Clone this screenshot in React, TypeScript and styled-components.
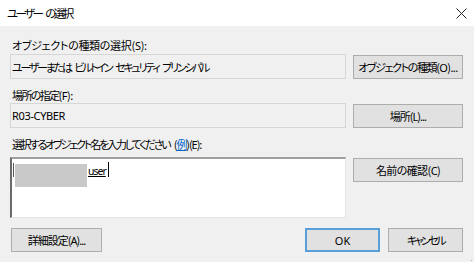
import React from "react";
import styled, { createGlobalStyle } from "styled-components";

const Global = createGlobalStyle`
  html, body { margin: 0; padding: 0; }
  body {
    width: 474px; height: 262px; overflow: hidden;
    font-family: "Noto Sans CJK JP", "Noto Sans", sans-serif;
    font-size: 11px; color: #000;
    font-feature-settings: "palt";
  }
`;

type Track = { $ls?: number; $ws?: number };

const tracking = (p: Track) =>
  `letter-spacing: ${p.$ls ?? -1}px; word-spacing: ${p.$ws ?? 0}px;`;

const Window = styled.div`
  width: 474px; height: 262px;
  display: flex; flex-direction: column;
  background: #f0f0f0;
  position: relative;
`;

const TitleBar = styled.div`
  height: 26px; flex: none;
  background: #fff;
  display: flex; align-items: center; justify-content: space-between;
  padding: 0 7px 0 7px;
  box-sizing: border-box;
`;

const TitleText = styled.span<Track>`
  font-size: 11.5px;
  ${tracking}
`;

const CloseBox = styled.div`
  width: 12px; height: 12px;
  display: flex; align-items: center; justify-content: center;
`;

const Body = styled.div`
  flex: 1;
  display: flex; flex-direction: column;
  padding: 11px 11px 0 10px;
`;

const Label = styled.div<Track & { $mt?: number; $mb?: number }>`
  height: 16px; line-height: 16px;
  padding-left: 2px;
  margin-top: ${(p) => p.$mt ?? 0}px;
  margin-bottom: ${(p) => p.$mb ?? 0}px;
  white-space: nowrap;
  ${tracking}
`;

const Suffix = styled.span<Track>`
  ${tracking}
`;

const Link = styled.span`
  color: #0066cc;
  text-decoration: underline;
`;

const Row = styled.div`
  display: flex; gap: 7px; align-items: flex-start;
`;

const ReadField = styled.div<Track>`
  flex: 1; height: 25px;
  box-sizing: border-box;
  border: 1px solid #d6d6d6;
  background: #f0f0f0;
  display: flex; align-items: center;
  padding-left: 1px;
  white-space: pre;
  ${tracking}
`;

const Latin = styled.span`
  font-family: "Noto Sans", "Liberation Sans", sans-serif;
`;

const Button = styled.button<Track & { $w: number; $primary?: boolean; $mt?: number }>`
  width: ${(p) => p.$w}px; height: 24px;
  flex: none;
  margin-top: ${(p) => p.$mt ?? 0}px;
  box-sizing: border-box;
  background: #e1e1e1;
  border: ${(p) => (p.$primary ? "2px solid #5a9fd8" : "1px solid #adadad")};
  font: inherit; color: #000;
  padding: 0;
  display: flex; align-items: center; justify-content: center;
  white-space: nowrap;
  ${tracking}
`;

const TextArea = styled.div`
  flex: 1; height: 61px;
  box-sizing: border-box;
  background: #fff;
  border-top: 2px solid #a0a0a0;
  border-left: 2px solid #6a6a6a;
  border-right: 1px solid #e3e3e3;
  border-bottom: 1px solid #e3e3e3;
  padding: 5px 0 0 1px;
  display: flex; align-items: flex-start;
`;

const Tick = styled.div`
  width: 1px; height: 14px; background: #555;
  margin-top: -1px; margin-right: 1px;
`;

const Redacted = styled.div`
  width: 72px; height: 23px;
  background: #c9c9c9;
`;

const UserText = styled.span`
  font-family: "Noto Sans", "Liberation Sans", sans-serif;
  font-size: 10.5px;
  letter-spacing: -1px;
  line-height: 14px;
  text-decoration: underline;
  text-underline-offset: 1px;
  margin-left: 1px;
`;

const Caret = styled.div`
  width: 1px; height: 15px; background: #000;
  margin-left: 2px; margin-top: -2px;
`;

const Footer = styled.div`
  display: flex; align-items: center; gap: 8px;
  margin-top: 10px;
`;

const Spacer = styled.div`
  flex: 1;
`;

const Grip = styled.div`
  position: absolute; right: 1px; bottom: 1px;
  width: 8px; height: 8px;
`;

export default function App() {
  return (
    <Window>
      <Global />
      <TitleBar>
        <TitleText $ls={-2.6} $ws={4}>ユーザー の選択</TitleText>
        <CloseBox>
          <svg width="11" height="11" viewBox="0 0 11 11">
            <path d="M0.5 0.5 L10.5 10.5 M10.5 0.5 L0.5 10.5" stroke="#222" strokeWidth="1" fill="none" />
          </svg>
        </CloseBox>
      </TitleBar>
      <Body>
        <Label $mb={1} $ls={-0.3}>オブジェクトの種類の選択(<Latin>S</Latin>):</Label>
        <Row>
          <ReadField $ls={-2.25} $ws={3.5}>ユーザーまたは ビルトイン セキュリティ プリンシパル</ReadField>
          <Button $w={110} $mt={1} $ls={-1.4}>
            オブジェクトの種類<Suffix $ls={-0.6}>(<Latin>O</Latin>)...</Suffix>
          </Button>
        </Row>
        <Label $mt={8} $ls={-1.6}>
          場所の指定<Suffix $ls={-0.5}>(<Latin>F</Latin>):</Suffix>
        </Label>
        <Row>
          <ReadField $ls={-0.35}><Latin>R03-CYBER</Latin></ReadField>
          <Button $w={110} $mt={1} $ls={-1}>場所(<Latin>L</Latin>)...</Button>
        </Row>
        <Label $mt={8} $mb={5} $ls={-2.15} $ws={4}>
          選択するオブジェクト名を入力してください{" "}
          <Suffix $ls={-1.1}>(<Link>例</Link>)(<Latin>E</Latin>):</Suffix>
        </Label>
        <Row>
          <TextArea>
            <Tick />
            <Redacted />
            <UserText>user</UserText>
            <Caret />
          </TextArea>
          <Button $w={110} $mt={1} $ls={-0.6}>名前の確認(<Latin>C</Latin>)</Button>
        </Row>
        <Footer>
          <Button $w={91} $ls={-1} style={{ marginLeft: 1 }}>詳細設定(<Latin>A</Latin>)...</Button>
          <Spacer />
          <Button $w={75} $primary $ls={0}><Latin>OK</Latin></Button>
          <Button $w={75} $ls={-2.5}>キャンセル</Button>
        </Footer>
      </Body>
      <Grip>
        <svg width="8" height="8" viewBox="0 0 8 8">
          <rect x="6" y="2" width="1" height="1" fill="#b5b5b5" />
          <rect x="4" y="4" width="1" height="1" fill="#b5b5b5" />
          <rect x="6" y="4" width="1" height="1" fill="#b5b5b5" />
          <rect x="2" y="6" width="1" height="1" fill="#b5b5b5" />
          <rect x="4" y="6" width="1" height="1" fill="#b5b5b5" />
          <rect x="6" y="6" width="1" height="1" fill="#b5b5b5" />
        </svg>
      </Grip>
    </Window>
  );
}
